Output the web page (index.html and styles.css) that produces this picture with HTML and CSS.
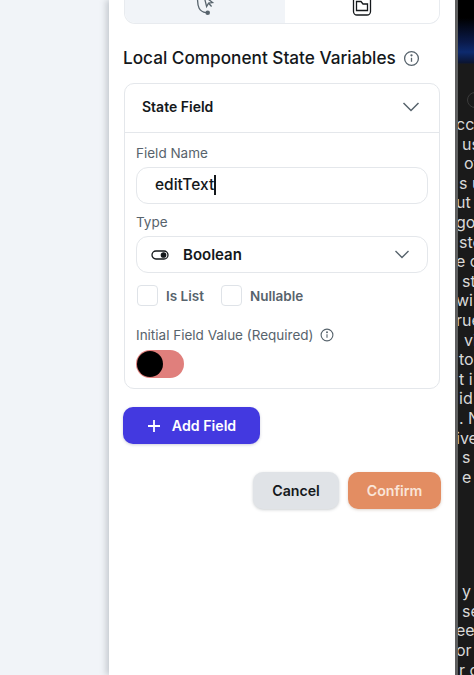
FILE: index.html
```html
<!DOCTYPE html>
<html lang="en">
<head>
<meta charset="utf-8">
<title>Local Component State Variables</title>
<link rel="stylesheet" href="styles.css">
</head>
<body>
<div class="page">
  <aside class="backdrop"></aside>
  <main class="panel">
    <div class="tabs">
      <div class="tab tab-off">
        <svg class="tab-icon" width="30" height="20" viewBox="0 0 30 20" fill="none" stroke="#57636c" stroke-width="1.300"><path d="M7.500 2C7.500 11 9 15.500 16 16.700"/><circle cx="17.700" cy="16.700" r="2.300" fill="#57636c" stroke="none"/><path d="M14 0l2.600 10.500 2-3.300 4-.7z"/><path d="M18.600 7.200l3 3.300"/></svg>
      </div>
      <div class="tab tab-on">
        <svg class="tab-icon" width="30" height="20" viewBox="0 0 30 20" fill="none" stroke="#14181b" stroke-width="1.300"><rect x="6.500" y="-6" width="17" height="25" rx="3.500"/><path d="M9.500 5.500h4.500l2 2.500h4.500v6.500h-11z"/></svg>
      </div>
    </div>

    <div class="title-row">
      <h1 class="title">Local Component State Variables</h1>
      <svg class="info" width="17" height="17" viewBox="0 0 17 17" fill="none" stroke="#57636c" stroke-width="1.300"><circle cx="8.500" cy="8.500" r="6.900"/><path d="M8.500 7.800v4"/><circle cx="8.500" cy="5.300" r=".5" fill="#57636c"/></svg>
    </div>

    <section class="card">
      <header class="card-head">
        <span class="card-title">State Field</span>
        <svg width="18" height="10" viewBox="0 0 18 10" fill="none" stroke="#57636c" stroke-width="1.500"><path d="M1.500 1l7.500 7.500L16.500 1"/></svg>
      </header>
      <div class="card-body">
        <label class="label">Field Name</label>
        <div class="control name-control"><span class="name-text">editText</span><span class="caret"></span></div>
        <label class="label type-label">Type</label>
        <div class="control type-control">
          <svg width="18" height="12" viewBox="0 0 18 12" fill="none" stroke="#14181b" stroke-width="1.300"><rect x="1" y="2" width="16" height="8" rx="4"/><circle cx="12.500" cy="6" r="2.200" fill="#14181b"/></svg>
          <span class="type-text">Boolean</span>
          <svg class="type-chevron" width="16" height="9" viewBox="0 0 16 9" fill="none" stroke="#57636c" stroke-width="1.400"><path d="M1.500 1l6.500 6.500L14.500 1"/></svg>
        </div>
        <div class="checks">
          <span class="box"></span><span class="check-label check-list">Is List</span>
          <span class="box"></span><span class="check-label">Nullable</span>
        </div>
        <div class="initial">
          <span class="label">Initial Field Value (Required)</span>
          <svg width="14" height="14" viewBox="0 0 14 14" fill="none" stroke="#57636c" stroke-width="1.100"><circle cx="7" cy="7" r="5.900"/><path d="M7 6.300v3.500"/><circle cx="7" cy="4.300" r=".4" fill="#57636c"/></svg>
        </div>
        <div class="toggle"><span class="knob"></span></div>
      </div>
    </section>

    <button class="btn add" type="button">
      <svg width="14" height="14" viewBox="0 0 14 14" stroke="#fff" stroke-width="1.800"><path d="M7 1v12M1 7h12"/></svg>
      <span>Add Field</span>
    </button>

    <div class="actions">
      <button class="btn cancel" type="button">Cancel</button>
      <button class="btn confirm" type="button">Confirm</button>
    </div>
  </main>
  <aside class="editor">
    <div class="editor-top"></div>
    <div class="editor-bar"><span class="editor-dot"></span></div>
    <div class="code">
      <div class="l cut">cc</div>
      <div class="l p1">us</div>
      <div class="l p2">ot</div>
      <div class="l">s u</div>
      <div class="l cut">ut</div>
      <div class="l cut">go</div>
      <div class="l">sto</div>
      <div class="l cut">e c</div>
      <div class="l p1">st</div>
      <div class="l cut">wi</div>
      <div class="l cut">rue</div>
      <div class="l p2">vi</div>
      <div class="l">to</div>
      <div class="l">t i</div>
      <div class="l">id</div>
      <div class="l">. N</div>
      <div class="l cut">ive</div>
      <div class="l p1">s</div>
      <div class="l p1">e</div>
      <div class="l gap"></div>
      <div class="l p1">y</div>
      <div class="l p1">se</div>
      <div class="l cut">ee</div>
      <div class="l cut">or</div>
      <div class="l">r c</div>
    </div>
  </aside>
</div>
</body>
</html>
```
FILE: styles.css
```css
* { box-sizing: border-box; }
html, body { margin: 0; height: 100%; overflow: hidden; }
body { font-family: Inter, "Liberation Sans", sans-serif; color: #14181b; background: #fff; }
.page { display: flex; width: 474px; height: 675px; }
.backdrop { width: 109px; flex: none; background: #f1f4f8; }
.panel { position: relative; width: 346px; flex: none; padding: 0 14px 0 15px; background: #fff; box-shadow: -3px 0 6px rgba(90, 100, 110, .28); }

.tabs { display: flex; height: 24px; border: 1px solid #e8ebef; border-top: 0; border-radius: 0 0 11px 11px; overflow: hidden; margin-right: 1px; }
.tab { display: flex; justify-content: center; align-items: flex-end; overflow: hidden; }
.tab-off { width: 160px; background: #f1f4f8; }
.tab-on { flex: 1; background: #fff; border-bottom-left-radius: 8px; }
.tab-icon { flex: none; margin-bottom: 7px; }

.title-row { display: flex; align-items: center; gap: 7px; margin-top: 21px; height: 26px; }
.title { margin: 0 0 0 -1px; font-size: 17.200px; font-weight: 450; line-height: 26px; white-space: nowrap; }

.card { margin-top: 12px; margin-right: 1px; height: 306px; border: 1px solid #e4e7eb; border-radius: 10px; }
.card-head { display: flex; align-items: center; justify-content: space-between; height: 49px; padding: 0 19px 3px 17px; border-bottom: 1px solid #e4e7eb; }
.card-title { font-size: 14px; font-weight: 600; }
.card-body { padding: 10px 11px 0 11px; }
.label { display: block; font-size: 13.500px; line-height: 20px; color: #57636c; }
.control { display: flex; align-items: center; height: 37px; border: 1px solid #e4e7eb; border-radius: 12px; background: #fff; }
.name-control { margin-top: 4px; padding: 0 0 2px 18px; }
.name-text { font-size: 15.500px; font-weight: 500; }
.caret { width: 1.500px; height: 20px; background: #14181b; }
.type-label { margin-top: 8px; }
.type-control { margin-top: 4px; padding: 0 17px 0 14px; }
.type-text { margin-left: 14px; font-size: 15px; font-weight: 600; }
.type-chevron { margin-left: auto; }
.checks { display: flex; align-items: center; margin-top: 12px; padding-left: 1px; }
.box { width: 21px; height: 21px; border: 1px solid #dfe3e8; border-radius: 4px; }
.check-label { margin-left: 8px; font-size: 13.500px; font-weight: 600; color: #57636c; }
.check-list { width: 55px; }
.initial { display: flex; align-items: center; gap: 6px; margin-top: 19px; }
.toggle { display: flex; align-items: center; width: 48px; height: 28px; margin-top: 5px; padding-left: 1px; border-radius: 14px; background: #e07f7c; }
.knob { width: 26px; height: 26px; border-radius: 50%; background: #000; }

.btn { display: flex; align-items: center; justify-content: center; height: 37px; border: 0; border-radius: 10px; font-family: inherit; font-size: 14.200px; font-weight: 600; }
.add { gap: 11px; width: 137px; margin: 18px 0 0 -1px; background: #4339e0; color: #fff; box-shadow: 0 1px 3px rgba(60, 60, 120, .25); }
.actions { display: flex; justify-content: flex-end; gap: 9px; margin: 28px 0 0; }
.cancel { width: 86px; padding-bottom: 1px; background: #e0e3e7; color: #14181b; box-shadow: 0 1px 3px rgba(60, 70, 80, .25); }
.confirm { width: 93px; padding-bottom: 1px; background: #e38d62; color: #fae5d8; box-shadow: 0 1px 3px rgba(120, 80, 50, .25); }

.editor { flex: 1; min-width: 0; overflow: hidden; background: #1a1a1a; border-left: 3px solid #5f5f5f; color: #d8d8d8; }
.editor-top { height: 64px; background: linear-gradient(#000 18px, #0a1a4a 42px, #0d2a6e 52px, #0b1430 63px, #1d1d1d 64px); }
.editor-bar { height: 51px; padding: 28px 0 0 9px; overflow: hidden; }
.editor-dot { display: block; width: 16px; height: 16px; border: 1.500px solid #3a3a3a; border-radius: 50%; }
.code { font-size: 16px; line-height: 19.600px; }
.l { padding-left: 1px; white-space: pre; }
.cut { margin-left: -3px; }
.p1 { padding-left: 4px; }
.p2 { padding-left: 6px; }
.gap { height: 95px; }
```
